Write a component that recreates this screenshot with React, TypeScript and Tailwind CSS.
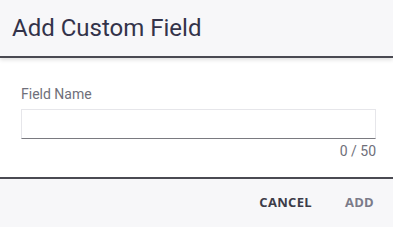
export default function App() {
  return (
    <div className="w-[393px] h-[227px] bg-white flex flex-col overflow-hidden font-['Roboto',sans-serif]">
      {/* Header */}
      <div className="relative h-[58px] shrink-0 bg-[#f7f7f9] border-b-2 border-[#4a4a52] flex items-center px-3 shadow-[0_2px_4px_rgba(0,0,0,0.12)]">
        <h1 className="text-[24px] font-normal text-[#33334a] leading-none">Add Custom Field</h1>
      </div>

      {/* Body */}
      <div className="flex-1 pl-[21px] pr-[17px] pt-[29px]">
        <label className="block text-[14px] text-[#6f6f7a] leading-none">Field Name</label>
        <input
          className="mt-[8px] block w-full h-[30px] border border-[#e6e6ea] border-b-[#7a7a80] bg-white outline-none px-2 text-[14px]"
          type="text"
        />
        <div className="mt-[5px] text-right text-[14px] text-[#6f6f7a] leading-none">0 / 50</div>
      </div>

      {/* Footer */}
      <div className="h-[50px] shrink-0 bg-[#f7f7f9] border-t-2 border-[#4a4a52] flex items-center justify-end gap-[33px] pr-[19px] font-['Open_Sans',sans-serif]">
        <button className="text-[13px] font-bold tracking-[0.3px] text-[#3c3c48]">CANCEL</button>
        <button className="text-[13px] font-bold tracking-[0.3px] text-[#7b7b89]">ADD</button>
      </div>
    </div>
  )
}
